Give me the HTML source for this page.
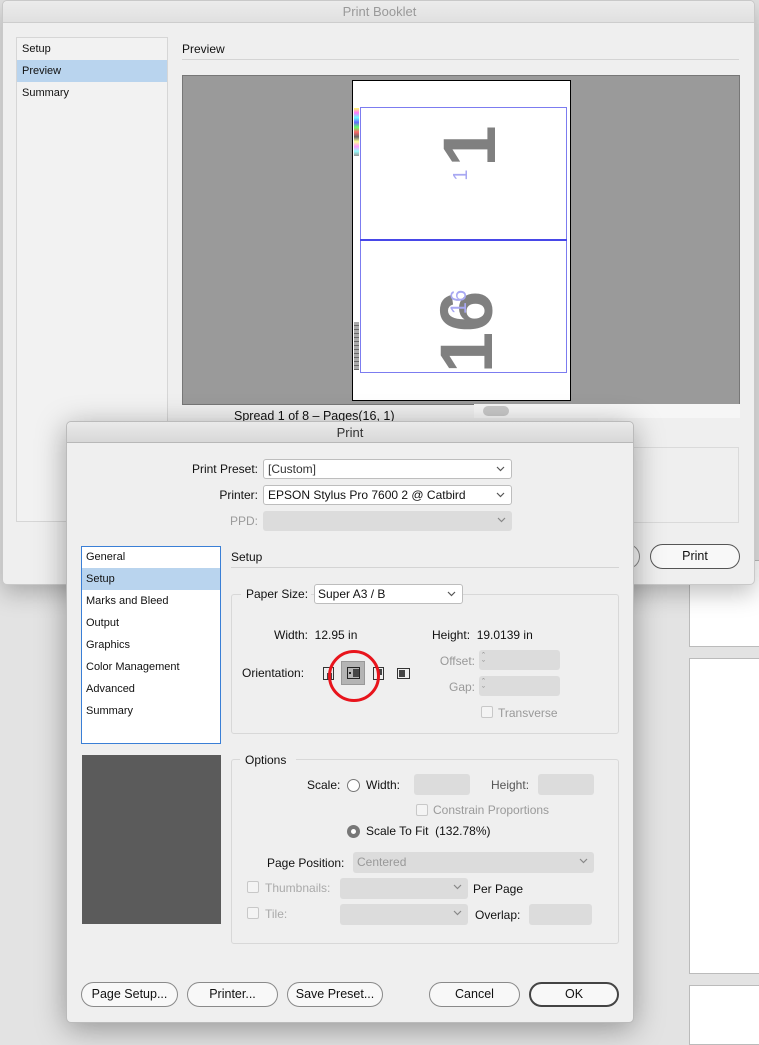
<!DOCTYPE html>
<html><head><meta charset="utf-8"><style>
*{margin:0;padding:0;box-sizing:border-box}
body{width:759px;height:1025px;background:#e3e3e3;font-family:"Liberation Sans",sans-serif;font-size:12px;color:#111;position:relative;overflow:hidden}
.a{position:absolute}
.t{position:absolute;line-height:14px;white-space:nowrap}
.g{color:#9a9a9a}
.sel{position:absolute;background:#fff;border:1px solid #bdbdbd;border-radius:3px}
.dis{position:absolute;background:#dcdcdc;border-radius:3px}
.chev{position:absolute;right:6px;top:6px;width:9px;height:6px}
.btn{position:absolute;height:25px;border:1px solid #8a8a8a;border-radius:13px;background:#f8f8f8;text-align:center;line-height:23px;font-size:12.5px}
.cb{position:absolute;width:12px;height:12px;border:1px solid #c8c8c8;border-radius:2px;background:#f4f4f4}
.grp{position:absolute;border:1px solid #d8d8d8;border-radius:3px}
.rot{position:absolute;white-space:nowrap;transform:translate(-50%,-50%) rotate(-90deg);line-height:1}
</style></head><body>
<div class="a" style="left:689px;top:560px;width:80px;height:87px;background:#fff;border:1px solid #bbb"></div>
<div class="a" style="left:689px;top:658px;width:80px;height:316px;background:#fff;border:1px solid #bbb"></div>
<div class="a" style="left:689px;top:985px;width:80px;height:60px;background:#fff;border:1px solid #bbb"></div>

<div class="a" style="left:2px;top:0;width:753px;height:585px;background:#efefef;border:1px solid #c9c9c9;border-radius:5px;box-shadow:0 8px 24px rgba(0,0,0,.25)"></div>
<div class="a" style="left:3px;top:1px;width:751px;height:22px;background:linear-gradient(#ececec,#e0e0e0);border-bottom:1px solid #cdcdcd;border-radius:5px 5px 0 0"></div>
<div class="t" style="left:0;width:759px;text-align:center;top:5px;color:#999;font-size:13px">Print Booklet</div>
<div class="a" style="left:16px;top:37px;width:152px;height:485px;background:#f2f2f2;border:1px solid #d6d6d6"></div>
<div class="a" style="left:17px;top:60px;width:150px;height:22px;background:#b9d4ee"></div>
<div class="t" style="left:22px;top:42px;font-size:11px">Setup</div>
<div class="t" style="left:22px;top:64px;font-size:11px">Preview</div>
<div class="t" style="left:22px;top:86px;font-size:11px">Summary</div>
<div class="t" style="left:182px;top:42px">Preview</div>
<div class="a" style="left:182px;top:59px;width:557px;height:1px;background:#d4d4d4"></div>
<div class="a" style="left:182px;top:75px;width:558px;height:330px;background:#9a9a9a;border:1px solid #777"></div>
<div class="a" style="left:352px;top:80px;width:219px;height:321px;background:#fff;border:1px solid #000"></div>
<div class="a" style="left:360px;top:107px;width:207px;height:266px;border:1px solid #7c7cf0"></div>
<div class="a" style="left:360px;top:239px;width:207px;height:2px;background:#4848e8"></div>
<div class="a" style="left:354px;top:108px;width:5px;height:48px;background:linear-gradient(#ff6,#f7f,#6ff,#66f,#6f6,#f66,#666,#ff9,#f9f,#9ff,#999)"></div>
<div class="a" style="left:354px;top:322px;width:5px;height:48px;background:repeating-linear-gradient(#aaa 0 3px,#666 3px 4px)"></div>
<div class="rot" style="left:470px;top:146px;font-size:74px;color:#808080;font-weight:bold">1</div>
<div class="rot" style="left:461px;top:175px;font-size:20px;color:#a8a8f2">1</div>
<div class="rot" style="left:467px;top:332px;font-size:74px;color:#808080;font-weight:bold">16</div>
<div class="rot" style="left:459px;top:302px;font-size:22px;color:#a8a8f2">16</div>
<div class="a" style="left:474px;top:404px;width:266px;height:14px;background:#f6f6f6"></div>
<div class="a" style="left:483px;top:406px;width:26px;height:10px;background:#c8c8c8;border-radius:5px"></div>
<div class="t" style="left:234px;top:409px;font-size:12.5px">Spread 1 of 8 – Pages(16, 1)</div>
<div class="a" style="left:182px;top:447px;width:557px;height:76px;border:1px solid #dadada"></div>
<div class="btn" style="left:600px;top:544px;width:40px"></div>
<div class="btn" style="left:650px;top:544px;width:90px;border-color:#555">Print</div>

<div class="a" style="left:66px;top:421px;width:568px;height:602px;background:#efefef;border:1px solid #bbb;border-radius:5px;box-shadow:0 6px 30px rgba(0,0,0,.35)"></div>
<div class="a" style="left:67px;top:422px;width:566px;height:21px;background:linear-gradient(#eaeaea,#d8d8d8);border-bottom:1px solid #b8b8b8;border-radius:5px 5px 0 0"></div>
<div class="t" style="left:66px;width:568px;text-align:center;top:426px;font-size:13px;color:#333">Print</div>

<div class="t" style="left:150px;width:108px;text-align:right;top:462px">Print Preset:</div>
<div class="sel" style="left:263px;top:459px;width:249px;height:20px"><span class="t" style="left:4px;top:2px;color:#333">[Custom]</span><svg class="chev" viewBox="0 0 9 6"><path d="M1 1l3.5 3.5L8 1" fill="none" stroke="#555" stroke-width="1.2"/></svg></div>
<div class="t" style="left:150px;width:108px;text-align:right;top:488px">Printer:</div>
<div class="sel" style="left:263px;top:485px;width:249px;height:20px"><span class="t" style="left:4px;top:2px">EPSON Stylus Pro 7600 2 @ Catbird</span><svg class="chev" viewBox="0 0 9 6"><path d="M1 1l3.5 3.5L8 1" fill="none" stroke="#555" stroke-width="1.2"/></svg></div>
<div class="t g" style="left:150px;width:108px;text-align:right;top:514px">PPD:</div>
<div class="dis" style="left:263px;top:511px;width:249px;height:20px"><svg class="chev" viewBox="0 0 9 6"><path d="M1 1l3.5 3.5L8 1" fill="none" stroke="#888" stroke-width="1.2"/></svg></div>

<div class="a" style="left:81px;top:546px;width:140px;height:198px;background:#fff;border:1px solid #3a7fd6"></div>
<div class="a" style="left:82px;top:568px;width:138px;height:22px;background:#b9d4ee"></div>
<div class="t" style="left:86px;top:550px;font-size:11px">General</div>
<div class="t" style="left:86px;top:572px;font-size:11px">Setup</div>
<div class="t" style="left:86px;top:594px;font-size:11px">Marks and Bleed</div>
<div class="t" style="left:86px;top:616px;font-size:11px">Output</div>
<div class="t" style="left:86px;top:638px;font-size:11px">Graphics</div>
<div class="t" style="left:86px;top:660px;font-size:11px">Color Management</div>
<div class="t" style="left:86px;top:682px;font-size:11px">Advanced</div>
<div class="t" style="left:86px;top:704px;font-size:11px">Summary</div>
<div class="a" style="left:82px;top:755px;width:139px;height:169px;background:#5b5b5b"></div>

<div class="t" style="left:231px;top:550px">Setup</div>
<div class="a" style="left:231px;top:567px;width:388px;height:1px;background:#d4d4d4"></div>
<div class="grp" style="left:231px;top:594px;width:388px;height:140px"></div>
<div class="a" style="left:241px;top:586px;width:70px;height:16px;background:#efefef"></div>
<div class="t" style="left:246px;top:587px">Paper Size:</div>
<div class="sel" style="left:314px;top:584px;width:149px;height:20px"><span class="t" style="left:3px;top:2px">Super A3 / B</span><svg class="chev" viewBox="0 0 9 6"><path d="M1 1l3.5 3.5L8 1" fill="none" stroke="#555" stroke-width="1.2"/></svg></div>
<div class="t" style="left:274px;top:628px">Width:&nbsp; 12.95 in</div>
<div class="t" style="left:432px;top:628px">Height:&nbsp; 19.0139 in</div>
<div class="t" style="left:242px;top:666px">Orientation:</div>
<div class="a" style="left:323px;top:667px;width:11px;height:13px;border:1px solid #333"><div class="a" style="left:3px;top:5px;width:5px;height:6px;background:#444"></div></div>
<div class="a" style="left:341px;top:661px;width:24px;height:24px;background:#b4b4b4;border:1px solid #999"></div>
<div class="a" style="left:347px;top:667px;width:13px;height:12px;border:1px solid #222"><div class="a" style="left:5px;top:1px;width:6px;height:8px;background:#444"></div><div class="a" style="left:1px;top:4px;width:2px;height:2px;background:#222"></div></div>
<div class="a" style="left:373px;top:667px;width:11px;height:13px;border:1px solid #333"><div class="a" style="left:3px;top:1px;width:5px;height:6px;background:#444"></div></div>
<div class="a" style="left:397px;top:668px;width:13px;height:11px;border:1px solid #333"><div class="a" style="left:1px;top:1px;width:6px;height:7px;background:#444"></div></div>
<div class="a" style="left:328px;top:650px;width:52px;height:52px;border:3px solid #e8141c;border-radius:50%"></div>
<div class="t g" style="left:420px;width:55px;text-align:right;top:654px;color:#999">Offset:</div>
<div class="dis" style="left:479px;top:650px;width:81px;height:20px"><span class="t" style="left:3px;top:2px;color:#888;font-size:9px;line-height:8px">&#710;<br>&#711;</span></div>
<div class="t g" style="left:420px;width:55px;text-align:right;top:680px;color:#999">Gap:</div>
<div class="dis" style="left:479px;top:676px;width:81px;height:20px"><span class="t" style="left:3px;top:2px;color:#888;font-size:9px;line-height:8px">&#710;<br>&#711;</span></div>
<div class="cb" style="left:481px;top:706px"></div>
<div class="t g" style="left:498px;top:706px">Transverse</div>

<div class="grp" style="left:231px;top:759px;width:388px;height:185px"></div>
<div class="a" style="left:240px;top:752px;width:56px;height:16px;background:#efefef"></div>
<div class="t" style="left:245px;top:753px">Options</div>
<div class="t" style="left:307px;top:778px">Scale:</div>
<div class="a" style="left:347px;top:779px;width:13px;height:13px;border:1px solid #777;border-radius:50%;background:#fff"></div>
<div class="t" style="left:366px;top:778px">Width:</div>
<div class="dis" style="left:414px;top:774px;width:56px;height:21px"></div>
<div class="t g" style="left:491px;top:778px;color:#555">Height:</div>
<div class="dis" style="left:538px;top:774px;width:56px;height:21px"></div>
<div class="cb" style="left:416px;top:804px"></div>
<div class="t g" style="left:433px;top:803px">Constrain Proportions</div>
<div class="a" style="left:347px;top:825px;width:13px;height:13px;border-radius:50%;background:#777"><div class="a" style="left:4px;top:4px;width:5px;height:5px;border-radius:50%;background:#fff"></div></div>
<div class="t" style="left:366px;top:824px">Scale To Fit&nbsp; (132.78%)</div>
<div class="t" style="left:267px;top:856px">Page Position:</div>
<div class="dis" style="left:353px;top:852px;width:241px;height:21px"><span class="t g" style="left:4px;top:3px;color:#999">Centered</span><svg class="chev" viewBox="0 0 9 6"><path d="M1 1l3.5 3.5L8 1" fill="none" stroke="#888" stroke-width="1.2"/></svg></div>
<div class="cb" style="left:247px;top:881px"></div>
<div class="t g" style="left:265px;top:881px;color:#aaa">Thumbnails:</div>
<div class="dis" style="left:340px;top:878px;width:128px;height:21px"><svg class="chev" viewBox="0 0 9 6"><path d="M1 1l3.5 3.5L8 1" fill="none" stroke="#888" stroke-width="1.2"/></svg></div>
<div class="t" style="left:473px;top:882px">Per Page</div>
<div class="cb" style="left:247px;top:907px"></div>
<div class="t g" style="left:265px;top:907px;color:#aaa">Tile:</div>
<div class="dis" style="left:340px;top:904px;width:128px;height:21px"><svg class="chev" viewBox="0 0 9 6"><path d="M1 1l3.5 3.5L8 1" fill="none" stroke="#888" stroke-width="1.2"/></svg></div>
<div class="t" style="left:475px;top:908px">Overlap:</div>
<div class="dis" style="left:529px;top:904px;width:63px;height:21px"></div>

<div class="btn" style="left:81px;top:982px;width:97px">Page Setup...</div>
<div class="btn" style="left:187px;top:982px;width:91px">Printer...</div>
<div class="btn" style="left:287px;top:982px;width:96px">Save Preset...</div>
<div class="btn" style="left:429px;top:982px;width:91px">Cancel</div>
<div class="btn" style="left:529px;top:982px;width:90px;border:2px solid #444;line-height:21px">OK</div>
</body></html>
